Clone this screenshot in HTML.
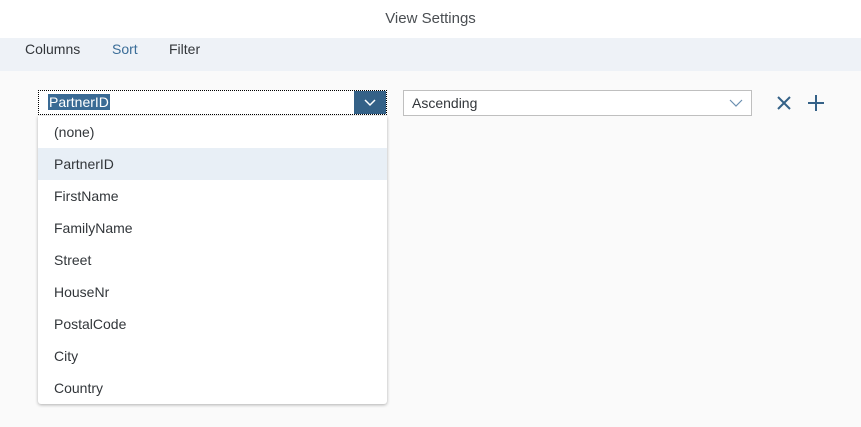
<!DOCTYPE html><html><head><style>
body{margin:0;width:861px;height:427px;background:#fafafa;font-family:"Liberation Sans",sans-serif;position:relative;overflow:hidden;color:#32363a}
.hdr{position:absolute;left:0;top:0;width:861px;height:38px;background:#fff;text-align:center;line-height:38px;font-size:15px;color:#4a4e52}
.tabs{position:absolute;left:0;top:38px;width:861px;height:33px;background:#eef2f7;font-size:14px}
.tabs span{position:absolute;top:3px}
.sel{position:absolute;left:38px;top:90px;width:347px;height:23px;border:1px dotted #000;background:#fff}
.sel .t{position:absolute;left:9px;top:3px;background:#3a6b95;color:#fff;font-size:14px;padding:0 1px}
.btn{position:absolute;right:0;top:0;width:32px;height:23px;background:#346187}
.asc{position:absolute;left:403px;top:90px;width:347px;height:24px;border:1px solid #bfbfbf;background:#fff;font-size:14px;line-height:24px}
.list{position:absolute;left:38px;top:116px;width:349px;height:288px;background:#fff;box-shadow:0 1px 3px rgba(0,0,0,.3);border-radius:0 0 3px 3px}
.list div{height:32px;line-height:32px;padding-left:16px;font-size:14px}
.list .h{background:#e8eff6}
</style></head><body>
<div class="hdr">View Settings</div>
<div class="tabs"><span style="left:25px">Columns</span><span style="left:112px;color:#3a6d98">Sort</span><span style="left:169px">Filter</span></div>
<div class="sel"><span class="t">PartnerID</span><div class="btn"><svg width="32" height="23"><path d="M11 9l5 5 5-5" stroke="#fff" stroke-width="1.5" fill="none"/></svg></div></div>
<div class="asc"><span style="margin-left:8px">Ascending</span><svg style="position:absolute;right:8px;top:7px" width="14" height="10"><path d="M1 2l6 6 6-6" stroke="#6a8fb0" stroke-width="1.2" fill="none"/></svg></div>
<svg style="position:absolute;left:776px;top:95px" width="16" height="16"><path d="M2 2l12 12M14 2L2 14" stroke="#346187" stroke-width="2"/></svg>
<svg style="position:absolute;left:807px;top:94px" width="18" height="18"><path d="M9 1v16M1 9h16" stroke="#346187" stroke-width="2"/></svg>
<div class="list"><div>(none)</div><div class="h">PartnerID</div><div>FirstName</div><div>FamilyName</div><div>Street</div><div>HouseNr</div><div>PostalCode</div><div>City</div><div>Country</div></div>
</body></html>
